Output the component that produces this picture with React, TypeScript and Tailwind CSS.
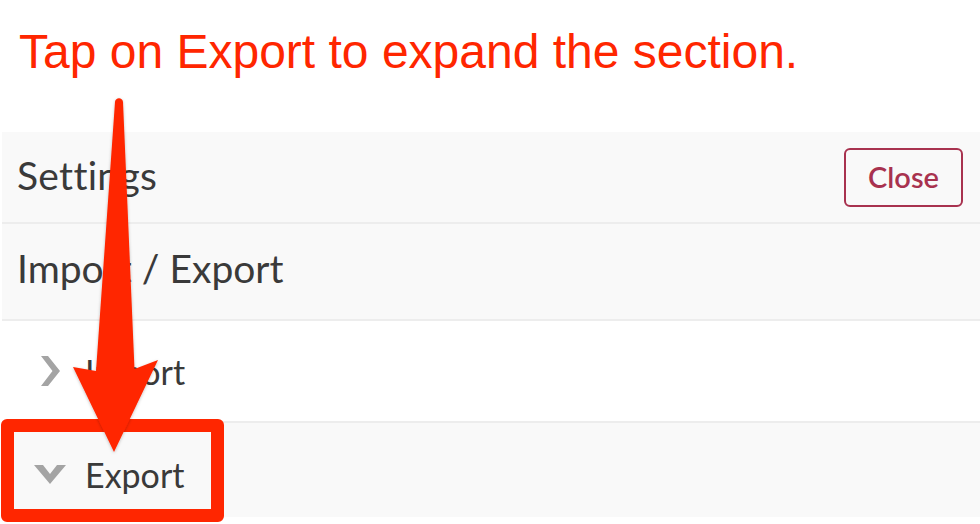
import { ReactNode } from 'react';

const panelFont = { fontFamily: 'Lato, "Open Sans", sans-serif' };

function Row({ children, white = false }: { children: ReactNode; white?: boolean }) {
  return (
    <div
      className={`flex items-center border-b-2 border-[#ededed] ${white ? 'bg-white' : 'bg-[#f9f9f9]'}`}
    >
      {children}
    </div>
  );
}

function ChevronRight() {
  return (
    <svg width="20" height="30" viewBox="0 0 20 30" className="shrink-0">
      <polygon points="1,0 8,0 20,15 8,30 1,30 12.5,15" fill="#a4a4a4" />
    </svg>
  );
}

function ChevronDown() {
  return (
    <svg width="32" height="19" viewBox="0 0 32 19" className="shrink-0">
      <polygon points="0,0 9,0 16,9 23,0 32,0 16,19" fill="#a4a4a4" />
    </svg>
  );
}

export default function App() {
  return (
    <div className="relative w-[980px] h-[524px] bg-white overflow-hidden">
      <div className="h-[132px]">
        <p
          className="pl-[19px] pt-[28px] text-[48px] leading-none text-[#ff2600]"
          style={{ fontFamily: '"Liberation Sans", Arial, sans-serif' }}
        >
          Tap on Export to expand the section.
        </p>
      </div>

      <div className="ml-[2px] text-[#3a3a3a]" style={panelFont}>
        <Row>
          <div className="flex h-[90px] w-full items-center justify-between pl-[15px] pr-[17px]">
            <span className="pb-[4px] text-[39px] tracking-[0.3px]">Settings</span>
            <button className="h-[59px] w-[119px] rounded-[6px] border-2 border-[#a8324f] text-[29px] font-semibold text-[#a8324f]">
              Close
            </button>
          </div>
        </Row>
        <Row>
          <div className="flex h-[95px] items-center pb-[6px] pl-[15px]">
            <span className="text-[39px]">Import / Export</span>
          </div>
        </Row>
        <Row white>
          <div className="flex h-[100px] items-center gap-[25px] pl-[38px]">
            <ChevronRight />
            <span className="text-[34px]">Import</span>
          </div>
        </Row>
        <div className="flex h-[94px] items-center gap-[19px] bg-[#f9f9f9] pl-[32px] pt-[8px]">
          <ChevronDown />
          <span className="text-[34px]">Export</span>
        </div>
      </div>

      <div className="pointer-events-none absolute left-[1px] top-[419px] h-[103px] w-[223px] rounded-[6px] border-[13px] border-[#ff2600]" />

      <svg
        className="pointer-events-none absolute left-0 top-0"
        width="980"
        height="524"
        viewBox="0 0 980 524"
      >
        <defs>
          <filter id="sh" x="-20%" y="-5%" width="140%" height="110%">
            <feDropShadow dx="0" dy="1" stdDeviation="1.5" floodColor="#000" floodOpacity="0.25" />
          </filter>
        </defs>
        <path
          d="M 115 102 C 115.5 97, 122.5 97, 123 102 L 134.5 369 L 158 360 L 114 452 L 73 367 L 96 371 Z"
          fill="#ff2600"
          filter="url(#sh)"
        />
      </svg>
    </div>
  );
}
